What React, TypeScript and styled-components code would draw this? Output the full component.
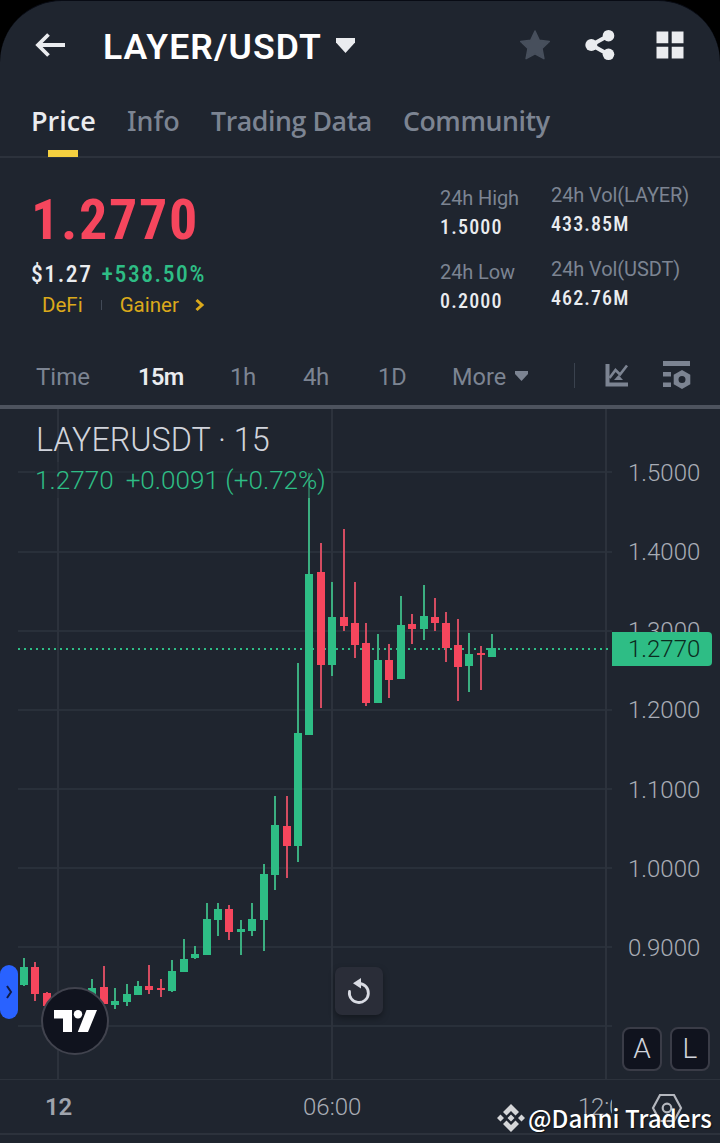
import React from 'react';
import styled, { createGlobalStyle } from 'styled-components';

const GlobalStyle = createGlobalStyle`
  * { box-sizing: border-box; }
  body { margin: 0; background: #000; }
`;

const color = {
  bg: '#1f252f',
  line: '#2c323c',
  text: '#eaecef',
  muted: '#7c8492',
  axis: '#a0a4ad',
  green: '#2ebd85',
  red: '#f6465d',
  gold: '#dba91b',
};

const Screen = styled.main`
  position: relative;
  width: 720px;
  height: 1143px;
  overflow: hidden;
  display: flex;
  flex-direction: column;
  background: ${color.bg};
  border-top: 1px solid #080b14;
  border-radius: 62px 62px 0 0;
  color: ${color.text};
  font-family: Roboto, sans-serif;
`;

const Label = styled.span<{
  $size: number;
  $weight?: number;
  $color?: string;
  $spacing?: number;
  $family?: string;
  $line?: number;
}>`
  display: block;
  white-space: pre;
  font-family: ${p => p.$family ?? 'Roboto'}, sans-serif;
  font-size: ${p => p.$size}px;
  font-weight: ${p => p.$weight ?? 400};
  color: ${p => p.$color ?? color.text};
  letter-spacing: ${p => p.$spacing ?? 0}px;
  line-height: ${p => (p.$line ? `${p.$line}px` : 1.2)};
`;

const Figure = styled(Label)`
  font-stretch: 75%;
`;

const Header = styled.header`
  flex: none;
  height: 89px;
  padding: 0 36px 0 34px;
  display: flex;
  align-items: center;
`;

const PairButton = styled.div`
  display: flex;
  align-items: center;
  gap: 14px;
  width: 396px;
  padding-top: 2px;
  margin-left: 37px;

  svg {
    margin-top: -2px;
  }
`;

const HeaderActions = styled.div`
  display: flex;
  align-items: center;
  flex: 1;
  margin: -2px 0 0 20px;
`;

const Tabs = styled.nav`
  flex: none;
  height: 68px;
  padding: 14px 0 0 31px;
  display: grid;
  grid-template-columns: 96px 84px 192px auto;
  border-bottom: 2px solid ${color.line};
`;

const Tab = styled.div<{ $active?: boolean }>`
  position: relative;
  &::after {
    content: '';
    display: ${p => (p.$active ? 'block' : 'none')};
    position: absolute;
    left: 17px;
    bottom: -1px;
    width: 30px;
    height: 7px;
    background: #f5d040;
  }
`;

const Summary = styled.section`
  flex: none;
  height: 188px;
  display: grid;
  grid-template-columns: 440px 111px auto;
`;

const PriceBlock = styled.div`
  padding: 29px 0 0 31px;
`;

const ChangeRow = styled.div`
  display: flex;
  gap: 9px;
  margin-top: 7px;
`;

const TagRow = styled.div`
  display: flex;
  align-items: center;
  margin: 3px 0 0 11px;
`;

const TagDivider = styled.i`
  width: 1px;
  height: 10px;
  margin: 0 18px;
  background: #424a57;
`;

const StatColumn = styled.div<{ $top: number }>`
  padding-top: ${p => p.$top}px;
`;

const Stat = styled.div`
  height: 74px;
`;

const Intervals = styled.section`
  flex: none;
  height: 59px;
  padding: 3px 29px 0 36px;
  display: flex;
  align-items: center;
`;

const IntervalItem = styled.div<{ $width: number }>`
  width: ${p => p.$width}px;
  display: flex;
  align-items: center;
  gap: 9px;

  svg {
    margin-top: -3px;
  }
`;

const ToolDivider = styled.i`
  width: 1px;
  height: 25px;
  margin: -4px 31px 0 0;
  background: #3a424e;
`;

const ToolIcons = styled.div`
  flex: 1;
  display: flex;
  align-items: center;
  justify-content: space-between;
  margin: -4px 0 0 -1px;
`;

const ChartPanel = styled.section`
  position: relative;
  flex: none;
  height: 674px;
  border-top: 4px solid #4d535e;
  display: grid;
  grid-template-columns: 612px 108px;
`;

const Legend = styled.div`
  position: absolute;
  left: 35px;
  top: 13px;
`;

const LegendTitle = styled(Label)`
  padding-left: 1px;
`;

const LegendValues = styled.div`
  display: flex;
  gap: 12px;
  margin-top: 4px;
  height: 36px;
  background: rgba(31, 37, 47, 0.5);
`;

const PriceAxis = styled.div`
  position: relative;
  padding: 49px 0 0 16px;
`;

const AxisLabel = styled(Label)`
  height: 79.15px;
`;

const LastPrice = styled.div`
  position: absolute;
  left: 0;
  top: 223px;
  width: 100px;
  height: 34px;
  padding-left: 16px;
  border-radius: 0 4px 4px 0;
  background: ${color.green};
`;

const ScaleButtons = styled.div`
  position: absolute;
  left: 10px;
  bottom: 8px;
  display: flex;
  gap: 8px;
`;

const ScaleButton = styled.button`
  width: 40px;
  height: 44px;
  padding: 0;
  display: grid;
  place-items: center;
  border: 2px solid #3a3c47;
  border-radius: 8px;
  background: #10131e;
`;

const DrawerHandle = styled.div`
  position: absolute;
  left: 0;
  top: 556px;
  width: 18px;
  height: 54px;
  display: grid;
  place-items: center;
  border-radius: 9px;
  background: #2962ff;
`;

const BrandBadge = styled.div`
  position: absolute;
  left: 41px;
  top: 578px;
  width: 68px;
  height: 68px;
  display: grid;
  place-items: center;
  border: 2px solid #41434e;
  border-radius: 50%;
  background: #10131e;
`;

const ResetButton = styled.button`
  position: absolute;
  left: 335px;
  top: 558px;
  width: 48px;
  height: 48px;
  padding: 0;
  display: grid;
  place-items: center;
  border: 0;
  border-radius: 7px;
  background: #2a2d38;
  box-shadow: 0 3px 6px rgba(0, 0, 0, 0.35);
`;

const TimeAxis = styled.footer`
  position: relative;
  flex: none;
  height: 56px;
  padding-top: 2px;
  display: grid;
  grid-template-columns: 303px 275px 34px 108px;
  align-items: center;
  border-top: 1px solid ${color.line};
  border-bottom: 2px solid ${color.line};
`;

const DateLabel = styled(Label)`
  padding-left: 45px;
`;

const ClippedTime = styled.div`
  overflow: hidden;
`;

const GearSlot = styled.div`
  display: flex;
  padding-left: 39px;
`;

const Watermark = styled.div`
  position: absolute;
  left: 497px;
  top: 1100px;
  display: flex;
  align-items: center;
  gap: 3px;
  text-shadow: 1px 1px 1px rgba(0, 0, 0, 0.6);
`;

const GREEN = 'g';
const RED = 'r';

// centre x, high, body top, body bottom, low, direction
type Candle = [number, number, number, number, number, string];

const candles: Candle[] = [
  [24, 958, 967, 985, 986, GREEN],
  [35, 962, 967, 994, 1001, RED],
  [47, 992, 993, 1006, 1008, RED],
  [92, 979, 988, 1004, 1004, GREEN],
  [104, 966, 987, 1004, 1004, RED],
  [115, 988, 1001, 1005, 1009, GREEN],
  [127, 984, 994, 1002, 1006, GREEN],
  [138, 981, 986, 995, 995, GREEN],
  [149, 965, 986, 990, 994, RED],
  [161, 979, 988, 990, 997, RED],
  [172, 960, 971, 991, 992, GREEN],
  [184, 939, 959, 972, 972, GREEN],
  [195, 946, 954, 958, 959, GREEN],
  [207, 903, 919, 955, 955, GREEN],
  [218, 903, 909, 920, 936, GREEN],
  [229, 905, 909, 932, 940, RED],
  [241, 920, 929, 932, 955, GREEN],
  [252, 903, 919, 931, 936, GREEN],
  [264, 864, 874, 920, 951, GREEN],
  [275, 796, 825, 875, 890, GREEN],
  [287, 796, 826, 846, 878, RED],
  [298, 663, 733, 846, 862, GREEN],
  [309, 473, 574, 735, 735, GREEN],
  [321, 543, 572, 665, 708, RED],
  [332, 582, 617, 665, 676, GREEN],
  [344, 529, 617, 626, 631, RED],
  [355, 582, 623, 645, 658, RED],
  [366, 623, 643, 703, 706, RED],
  [378, 634, 660, 703, 703, GREEN],
  [389, 644, 660, 680, 698, RED],
  [401, 596, 625, 679, 679, GREEN],
  [412, 614, 624, 629, 644, RED],
  [424, 585, 616, 629, 640, GREEN],
  [435, 598, 617, 623, 631, RED],
  [446, 612, 623, 648, 662, RED],
  [458, 619, 645, 667, 701, RED],
  [469, 633, 654, 666, 692, GREEN],
  [481, 646, 653, 655, 690, RED],
  [492, 634, 648, 657, 657, GREEN],
];

const prices = ['1.5000', '1.4000', '1.3000', '1.2000', '1.1000', '1.0000', '0.9000'];

const CandleChart = () => (
  <svg width="612" height="670" viewBox="0 409 612 670" shapeRendering="crispEdges">
    <g fill={color.line}>
      {[471, 551, 630, 709, 788, 867, 946, 1025].map(y => (
        <rect key={y} x="18" y={y} width="594" height="2" opacity="0.85" />
      ))}
      {[57, 331, 605].map(x => (
        <rect key={x} x={x} y="409" width="2" height="670" />
      ))}
    </g>
    <line
      x1="18" x2="612" y1="649" y2="649"
      stroke={color.green} strokeWidth="2" strokeDasharray="2 4"
    />
    {candles.map(([x, high, top, bottom, low, dir]) => {
      const up = dir === GREEN;
      return (
        <g key={x}>
          <rect x={x - 1} y={high} width="2" height={low - high} fill={up ? '#3bae80' : '#d34c61'} />
          <rect x={x - 4} y={top} width="8" height={bottom - top} fill={up ? color.green : color.red} />
        </g>
      );
    })}
  </svg>
);

const BackIcon = () => (
  <svg width="32" height="26" viewBox="0 0 32 26" fill="none" stroke={color.text} strokeWidth="3.800">
    <path d="M31 12H4M14.500 1.500L4 12l10.500 10.500" />
  </svg>
);

const Caret = ({ w, h, fill }: { w: number; h: number; fill: string }) => (
  <svg width={w} height={h} viewBox="0 0 18 15" preserveAspectRatio="none">
    <path d="M0 0h18v4.500L9 15 0 4.500z" fill={fill} />
  </svg>
);

const StarIcon = () => (
  <svg width="32" height="32" viewBox="0 0 32 32">
    <path
      d="M16 2l4.300 9.200 10 1.200-7.300 7 1.900 10.300L16 24.800l-8.900 4.900L9 19.400l-7.300-7 10-1.200z"
      fill="#474f5c" stroke="#474f5c" strokeWidth="1.500" strokeLinejoin="round"
    />
  </svg>
);

const ShareIcon = () => (
  <svg width="30" height="32" viewBox="0 0 30 32" style={{ margin: '0 41px 0 34px' }}>
    <path d="M23.500 6.500L6.500 16l17 9.500" fill="none" stroke={color.text} strokeWidth="4" />
    <g fill={color.text}>
      <circle cx="23.500" cy="6.700" r="5.800" />
      <circle cx="6.300" cy="16" r="6" />
      <circle cx="23.500" cy="25.300" r="5.800" />
    </g>
  </svg>
);

const GridIcon = () => (
  <svg width="28" height="28" viewBox="0 0 28 28">
    <path d="M0.500 0.500H12.300V12.300H0.500zM15.700 0.500H27.500V12.300H15.700zM0.500 15.700H12.300V27.500H0.500zM15.700 15.700H27.500V27.500H15.700z" fill={color.text} />
  </svg>
);

const IndicatorIcon = () => (
  <svg width="24" height="24" viewBox="0 0 24 24" fill="none" stroke={color.muted} strokeWidth="2.600">
    <path d="M2.500 1v20.500H23" strokeWidth="4" />
    <path d="M4.500 15l6-8 4.500 4.500 7-9" />
    <path d="M9 17h9l-4.500-5z" fill={color.muted} stroke="none" />
  </svg>
);

const ChartSettingsIcon = () => (
  <svg width="29" height="28" viewBox="0 0 29 28" fill={color.muted}>
    <path d="M1 0h27v5H1zM1 11h8v4.500H1zM1 21.500h8V26H1z" />
    <path fillRule="evenodd" d="M20 9l8.300 4.700v9.600L20 28l-8.300-4.700v-9.600zM20 15.100a3.500 3.500 0 100 7 3.500 3.500 0 000-7z" />
  </svg>
);

const TradingViewMark = () => (
  <svg width="44" height="24" viewBox="0 0 44 24" fill="#fff">
    <path d="M1 1h18v22h-9V9.500H1z" />
    <circle cx="25" cy="5.300" r="4.200" />
    <path d="M33.500 1H44l-9 22H24.800z" />
  </svg>
);

const ResetIcon = () => (
  <svg width="26" height="28" viewBox="0 0 26 28">
    <path d="M3.500 14.500A9.500 9.500 0 1013 6.500" fill="none" stroke="#d9dbe3" strokeWidth="2.800" strokeLinecap="round" />
    <path d="M15 1v10.500L7 6.300z" fill="#d9dbe3" />
  </svg>
);

const AxisGear = () => (
  <svg width="32" height="30" viewBox="0 0 32 30" fill="none" stroke="#b4b7be" strokeWidth="2.200">
    <path d="M9 2h14l7 13-7 13H9L2 15z" />
    <circle cx="16" cy="15" r="4.300" />
  </svg>
);

const WatermarkLogo = () => (
  <svg width="28" height="30" viewBox="0 0 28 30" fill="#d5d6d8">
    <path d="M14 1l8 8-3.500 3.500L14 8l-4.500 4.500L6 9zM14 29l8-8-3.500-3.500L14 22l-4.500-4.500L6 21zM14 11.500l3.500 3.500-3.500 3.500-3.500-3.500zM3.500 11.500L7 15l-3.500 3.500L0 15zM24.500 11.500L28 15l-3.500 3.500L21 15z" />
  </svg>
);

const App = () => (
  <>
    <GlobalStyle />
    <Screen>
      <Header>
        <BackIcon />
        <PairButton>
          <Label $size={35.5} $weight={600} $color="#fff" $spacing={1.1} $line={44}>LAYER/USDT</Label>
          <Caret w={19} h={15} fill={color.text} />
        </PairButton>
        <HeaderActions>
          <StarIcon />
          <ShareIcon />
          <GridIcon />
        </HeaderActions>
      </Header>

      <Tabs>
        <Tab $active><Label $size={27} $weight={600} $family="'Open Sans'" $line={34}>Price</Label></Tab>
        <Tab><Label $size={27} $weight={500} $family="'Noto Sans'" $color={color.muted} $line={34}>Info</Label></Tab>
        <Tab><Label $size={26.7} $weight={600} $spacing={-0.42} $family="'Open Sans'" $color={color.muted} $line={34}>Trading Data</Label></Tab>
        <Tab><Label $size={26.7} $weight={600} $spacing={-0.42} $family="'Open Sans'" $color={color.muted} $line={34}>Community</Label></Tab>
      </Tabs>

      <Summary>
        <PriceBlock>
          <Figure $size={56} $weight={700} $color={color.red} $spacing={1.7} $line={66}>1.2770</Figure>
          <ChangeRow>
            <Figure $size={23.5} $weight={500} $spacing={1.6} $line={28}>$1.27</Figure>
            <Figure $size={23.5} $weight={500} $spacing={1.6} $color={color.green} $line={28}>+538.50%</Figure>
          </ChangeRow>
          <TagRow>
            <Label $size={20.5} $color={color.gold} $line={28}>DeFi</Label>
            <TagDivider />
            <Label $size={20.5} $color={color.gold} $line={28}>Gainer</Label>
            <svg width="10" height="14" viewBox="0 0 10 14" style={{ marginLeft: 16 }}>
              <path d="M1.500 2L7 7l-5.500 5" fill="none" stroke={color.gold} strokeWidth="3" />
            </svg>
          </TagRow>
        </PriceBlock>
        <StatColumn $top={25}>
          <Stat>
            <Label $size={20} $color={color.muted} $spacing={-0.1} $line={30}>24h High</Label>
            <Figure $size={20} $weight={500} $spacing={1.2} $line={28}>1.5000</Figure>
          </Stat>
          <Stat>
            <Label $size={20} $color={color.muted} $spacing={-0.1} $line={30}>24h Low</Label>
            <Figure $size={20} $weight={500} $spacing={1.2} $line={28}>0.2000</Figure>
          </Stat>
        </StatColumn>
        <StatColumn $top={22}>
          <Stat>
            <Label $size={20} $color={color.muted} $spacing={-0.1} $line={30}>24h Vol(LAYER)</Label>
            <Figure $size={20} $weight={500} $spacing={1.1} $line={28}>433.85M</Figure>
          </Stat>
          <Stat>
            <Label $size={20} $color={color.muted} $spacing={-0.1} $line={30}>24h Vol(USDT)</Label>
            <Figure $size={20} $weight={500} $spacing={1.1} $line={28}>462.76M</Figure>
          </Stat>
        </StatColumn>
      </Summary>

      <Intervals>
        <IntervalItem $width={102}><Label $size={24} $color={color.muted}>Time</Label></IntervalItem>
        <IntervalItem $width={92}><Label $size={23.5} $weight={600} $spacing={-0.5}>15m</Label></IntervalItem>
        <IntervalItem $width={73}><Label $size={24} $color={color.muted} $spacing={-0.5}>1h</Label></IntervalItem>
        <IntervalItem $width={75}><Label $size={24} $color={color.muted} $spacing={-0.5}>4h</Label></IntervalItem>
        <IntervalItem $width={74}><Label $size={23.5} $color={color.muted}>1D</Label></IntervalItem>
        <IntervalItem $width={122}>
          <Label $size={23.5} $color={color.muted}>More</Label>
          <Caret w={13} h={10} fill={color.muted} />
        </IntervalItem>
        <ToolDivider />
        <ToolIcons>
          <IndicatorIcon />
          <ChartSettingsIcon />
        </ToolIcons>
      </Intervals>

      <ChartPanel>
        <CandleChart />
        <PriceAxis>
          {prices.map(p => (
            <AxisLabel key={p} $size={24} $weight={350} $color="#a9adb6" $line={30}>{p}</AxisLabel>
          ))}
          <LastPrice><Label $size={24} $weight={350} $color="#0b2b20" $line={35}>1.2770</Label></LastPrice>
          <ScaleButtons>
            <ScaleButton><Label $size={28} $weight={300} $color="#d1d4dc">A</Label></ScaleButton>
            <ScaleButton><Label $size={28} $weight={300} $color="#d1d4dc">L</Label></ScaleButton>
          </ScaleButtons>
        </PriceAxis>
        <Legend>
          <LegendTitle $size={32.3} $weight={300} $color="#d1d4dc" $line={36}>LAYERUSDT · 15</LegendTitle>
          <LegendValues>
            <Label $size={26.1} $weight={350} $color={color.green} $line={37}>1.2770</Label>
            <Label $size={26.1} $weight={350} $color={color.green} $line={37}>+0.0091 (+0.72%)</Label>
          </LegendValues>
        </Legend>
        <DrawerHandle>
          <svg width="8" height="16" viewBox="0 0 8 16">
            <path d="M2 2l4 6-4 6" fill="none" stroke="#101c48" strokeWidth="2" />
          </svg>
        </DrawerHandle>
        <BrandBadge><TradingViewMark /></BrandBadge>
        <ResetButton aria-label="Reset chart"><ResetIcon /></ResetButton>
      </ChartPanel>

      <TimeAxis>
        <DateLabel $size={24} $weight={600} $spacing={-0.3} $color={color.axis}>12</DateLabel>
        <Label $size={24} $weight={350} $color="#a9adb6">06:00</Label>
        <ClippedTime><Label $size={24} $weight={350} $spacing={-0.2} $color="#a9adb6">12:00</Label></ClippedTime>
        <GearSlot><AxisGear /></GearSlot>
      </TimeAxis>
      <Watermark>
        <WatermarkLogo />
        <Label $size={24.2} $weight={500} $color="#fff" $family="'Noto Sans CJK SC'" $line={34}>@Danni Traders</Label>
      </Watermark>
    </Screen>
  </>
);

export default App;
